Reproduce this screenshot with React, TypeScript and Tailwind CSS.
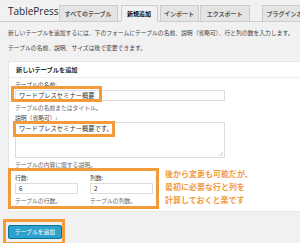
const tabs = [
  { label: 'すべてのテーブル', w: 'w-[59px]', ml: 'ml-0', active: false },
  { label: '新規追加', w: 'w-[37px]', ml: 'ml-[3px]', active: true },
  { label: 'インポート', w: 'w-[39px]', ml: 'ml-[2px]', active: false },
  { label: 'エクスポート', w: 'w-[50px]', ml: 'ml-[1px]', active: false },
  { label: 'プラグインオプション', w: 'w-[70px]', ml: 'ml-[12px]', active: false },
];

export default function App() {
  return (
    <div
      className="relative w-[300px] h-[243px] overflow-hidden bg-[#f1f1f1] text-[#444]"
      style={{ fontFamily: '"Noto Sans CJK JP", "Noto Sans", sans-serif' }}
    >
      {/* title + tabs */}
      <div className="flex items-end h-[22px] pl-[8px] border-b border-[#ccc]">
        <div className="w-[55px] h-[17px] text-[10px] leading-[14px] text-[#23282d] font-['Open_Sans',sans-serif]">
          TablePress
        </div>
        {tabs.map((t) => (
          <div
            key={t.label}
            className={`${t.w} ${t.ml} shrink-0 h-[17px] -mb-px flex items-center justify-center overflow-hidden whitespace-nowrap border text-[6px] font-bold ${
              t.active ? 'bg-[#f1f1f1] border-[#ccc] border-b-[#f1f1f1] text-[#000]' : 'bg-[#e4e4e4] border-[#ccc] text-[#555]'
            }`}
          >
            {t.label}
          </div>
        ))}
      </div>

      {/* intro */}
      <div className="pl-[8px] text-[5.8px] leading-[8px] whitespace-nowrap">
        <p className="mt-[7px]">新しいテーブルを追加するには、下のフォームにテーブルの名前、説明（省略可）、行と列の数を入力します。</p>
        <p className="mt-[7px]">テーブルの名前、説明、サイズは後で変更できます。</p>
      </div>

      {/* panel */}
      <div className="ml-[8px] mt-[9px] w-[300px] bg-white border border-[#e5e5e5]">
        <div className="h-[16px] flex items-center pl-[7px] border-b border-[#eee] text-[6.2px] font-bold text-[#23282d]">
          新しいテーブルを追加
        </div>
        <div className="pl-[6px] pb-[6px] text-[5.8px] leading-[8px]">
          <div className="mt-[3px]">テーブルの名前:</div>
          <div className="mt-px w-[210px] h-[11px] border border-[#ddd] flex items-center pl-[3px] text-[6.3px] text-[#333]">
            ワードプレスセミナー概要
          </div>
          <div className="mt-[3px] text-[#666]">テーブルの名前またはタイトル。</div>
          <div className="mt-[2px]">説明（省略可）:</div>
          <div className="relative w-[210px] h-[36px] border border-[#ddd] pl-[3px] pt-[2px] text-[6.3px] text-[#333]">
            ワードプレスセミナー概要です。
            <svg className="absolute right-px bottom-px" width="4" height="4" viewBox="0 0 4 4">
              <path d="M4 0L0 4M4 2L2 4" stroke="#aaa" strokeWidth="0.6" />
            </svg>
          </div>
          <div className="mt-[3px] text-[#666]">テーブルの内容に関する説明。</div>
          <div className="flex mt-[5px]">
            <div className="w-[75px]">
              <div>行数:</div>
              <div className="mt-px w-[63px] h-[11px] border border-[#ddd] flex items-center pl-[3px] text-[6.3px] text-[#333]">6</div>
              <div className="mt-[3px] text-[#666]">テーブルの行数。</div>
            </div>
            <div>
              <div>列数:</div>
              <div className="mt-px w-[63px] h-[11px] border border-[#ddd] flex items-center pl-[3px] text-[6.3px] text-[#333]">2</div>
              <div className="mt-[3px] text-[#666]">テーブルの列数。</div>
            </div>
          </div>
        </div>
      </div>

      {/* submit */}
      <div className="ml-[8px] mt-[13px] w-[54px] h-[14px] flex items-center justify-center bg-[#2ea2cc] border border-[#0074a2] rounded-[2px] text-white text-[5.8px]">
        テーブルを追加
      </div>

      {/* annotation frames */}
      <div className="absolute left-[11px] top-[86px] w-[91px] h-[16px] border-[3px] border-[#f39a3a]" />
      <div className="absolute left-[13px] top-[121px] w-[102px] h-[16px] border-[3px] border-[#f39a3a]" />
      <div className="absolute left-[8px] top-[168px] w-[151px] h-[41px] border-[3px] border-[#f39a3a]" />
      <div className="absolute left-[3px] top-[219px] w-[62px] h-[26px] border-[3px] border-[#f39a3a]" />
      <div className="absolute left-[165px] top-[167px] text-[8px] leading-[13px] font-bold text-[#f39a3a]">
        <p>後から変更も可能だが、</p>
        <p>最初に必要な行と列を</p>
        <p>計算しておくと楽です</p>
      </div>
    </div>
  );
}
